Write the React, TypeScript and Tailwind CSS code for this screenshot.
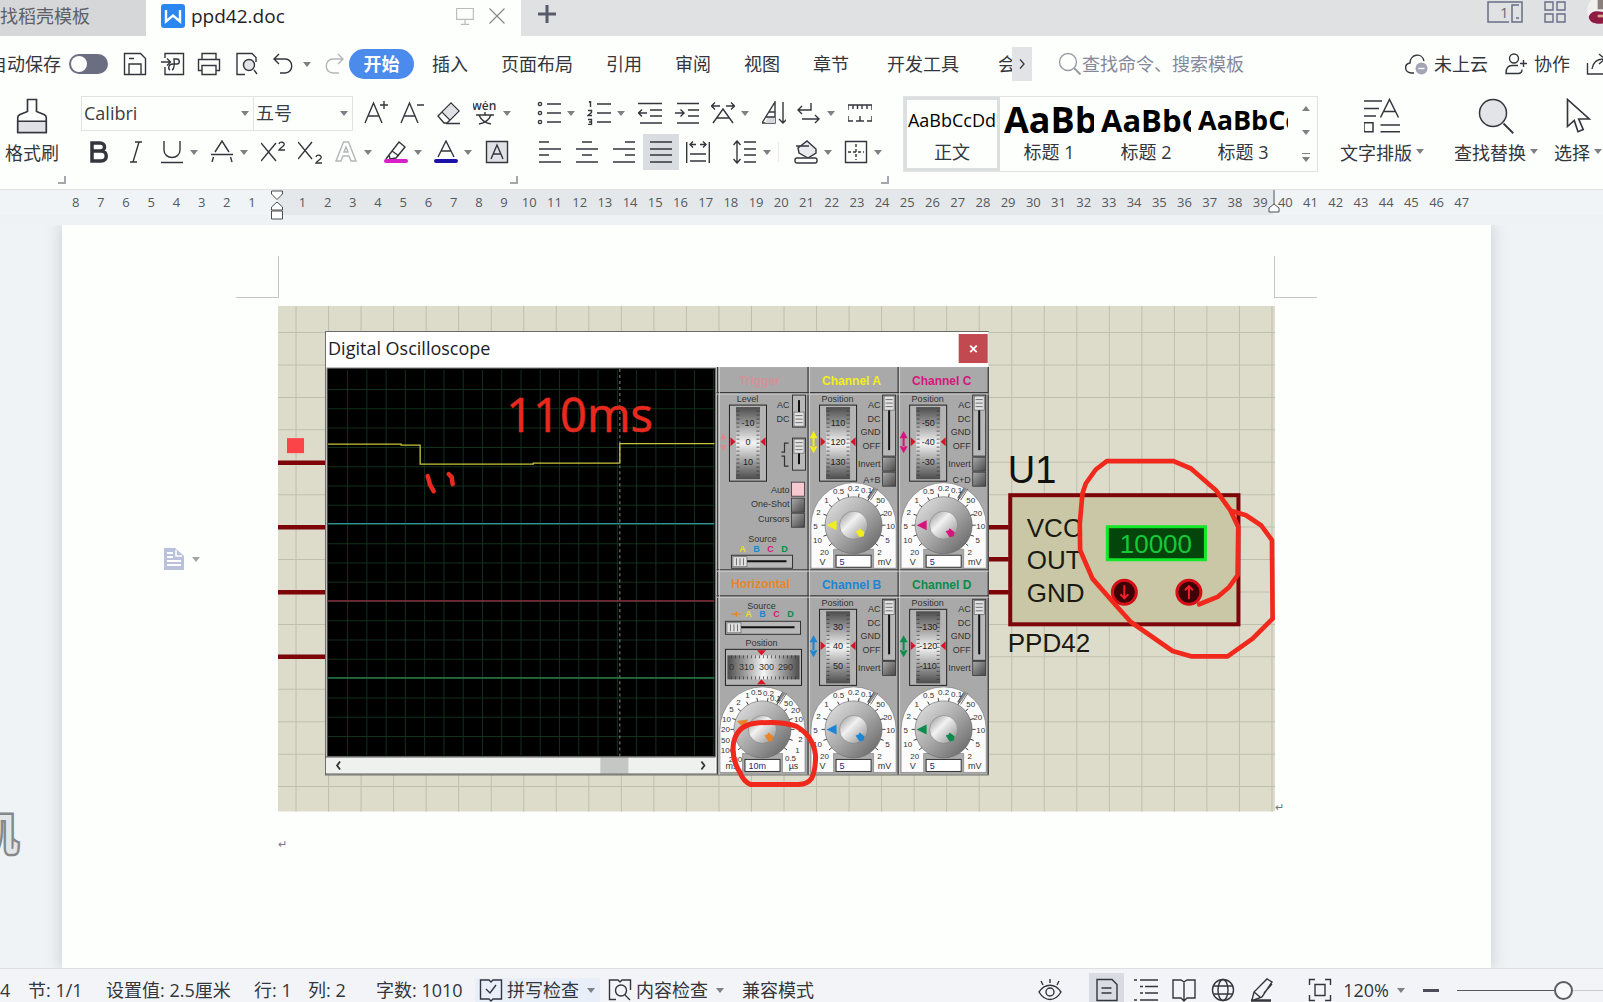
import React from 'react'

interface IconProps {
  children: React.ReactNode
  className?: string
}

const Icon: React.FC<IconProps> = function ({ children, className = 'size-6' }) {
  return (
    <svg viewBox="0 0 24 24" fill="none" stroke="currentColor" strokeWidth="1.4" className={`shrink-0 ${className}`} aria-hidden="true">
      {children}
    </svg>
  )
}

const Caret: React.FC<{ className?: string }> = function ({ className = '' }) {
  return (
    <svg viewBox="0 0 8 5" className={`h-[5px] w-2 shrink-0 fill-[#7d8084] ${className}`} aria-hidden="true">
      <path d="M0 0h8L4 5z" />
    </svg>
  )
}

interface ToolProps {
  label: string
  children: React.ReactNode
  wide?: boolean
  caret?: boolean
  active?: boolean
}

const Tool: React.FC<ToolProps> = function ({ label, children, wide, caret, active }) {
  const width = caret ? 'w-[50px] gap-[6px] pl-[5px]' : wide ? 'w-[38px] justify-center' : 'w-9 justify-center'
  return (
    <button type="button" aria-label={label} className={`flex h-9 shrink-0 items-center ${width} ${active ? 'bg-[#d9dce0]' : ''}`}>
      <Icon>{children}</Icon>
      {caret && <Caret />}
    </button>
  )
}

const GroupCorner: React.FC = () => (
  <div className="mt-auto mb-[5px] ml-auto h-2 w-2 shrink-0 border-r-2 border-b-2 border-[#a5a7aa]"></div>
)

/* ---------- title tabs ---------- */

const TabBar: React.FC = function () {
  return (
    <header className="flex h-9 shrink-0 bg-[#dfe1e3] text-lg leading-none">
      <button type="button" className="flex w-[146px] shrink-0 items-center overflow-hidden bg-[#d5d7d9] pb-1 whitespace-nowrap text-[#5d6067]">
        找稻壳模板
      </button>
      <div className="flex w-[375px] shrink-0 items-center bg-[#fdfffd] pb-1 pl-[15px]">
        <svg viewBox="0 0 24 24" className="size-6 shrink-0" aria-hidden="true">
          <rect width="24" height="24" rx="3" fill="#2b86f0" />
          <path d="M5 6v11.500l7-6 7 6V6" fill="none" stroke="#fff" strokeWidth="2.400" />
        </svg>
        <span className="ml-[6px] text-[19px] text-[#1f2227]">ppd42.doc</span>
        <Icon className="ml-auto size-5 text-[#b9bbbd]"><path d="M2 3h20v13H2zM12 16v6M7 22h10" /></Icon>
        <button type="button" aria-label="关闭" className="mr-[14px] ml-3">
          <Icon className="size-5 text-[#85888c]"><path d="M3 3l18 18M21 3L3 21" /></Icon>
        </button>
      </div>
      <button type="button" aria-label="新建" className="mb-2 ml-[14px]">
        <Icon className="size-6 text-[#585b6c]"><path d="M12 3v18M3 12h18" strokeWidth="3" /></Icon>
      </button>
      <div className="ml-auto flex items-center gap-5 pb-3 text-[#6a6d86]">
        <svg viewBox="0 0 36 22" className="h-[22px] w-9" fill="none" stroke="currentColor" strokeWidth="1.500">
          <path d="M22 21H1V1h34v20H25V4h7M29 17h3" />
          <text x="13" y="17" fontSize="15" fill="currentColor" stroke="none">1</text>
        </svg>
        <Icon className="size-6"><path d="M2 2h8v8H2zM14 2h8v8h-8zM2 14h8v8H2zM14 14h8v8h-8z" /></Icon>
        <svg viewBox="0 0 18 30" className="h-7 w-4" aria-hidden="true">
          <circle cx="16" cy="13" r="16" fill="#f0efee" />
          <path d="M12 0h6v12h-6z" fill="#8b7f7b" />
          <path d="M2 20c4-7 9-6 16-5v13C8 29 2 26 2 20z" fill="#8f1b44" />
          <path d="M12 18h6v3h-6z" fill="#d9a58d" />
        </svg>
      </div>
    </header>
  )
}

/* ---------- menu row ---------- */

const menuTabs = ['插入', '页面布局', '引用', '审阅', '视图', '章节']

const MenuRow: React.FC = function () {
  return (
    <nav className="flex h-14 shrink-0 items-center overflow-hidden text-lg leading-none whitespace-nowrap text-[#33363c]">
      <label className="flex w-[112px] shrink-0 items-center justify-end gap-2 pr-1">
        自动保存
        <input type="checkbox" className="peer sr-only" />
        <span className="flex h-5 w-[39px] shrink-0 items-center rounded-full bg-[#6b6d80] px-[2px]">
          <span className="size-4 rounded-full bg-white"></span>
        </span>
      </label>
      <button type="button" aria-label="保存" className="ml-[11px]">
        <Icon><path d="M1.500 1.500h16l5 5v16h-21zM6 22.500V12h12v10.500M6 6.500h5" /></Icon>
      </button>
      <button type="button" aria-label="输出为PDF" className="ml-[14px]">
        <Icon><path d="M4 6V1.500h18.500v21H4V15M0 10h9M6 6.500l3.500 3.500L6 13.500M11 18c3-1 2-11 2-11h3c3 0 3 5 0 5h-4c-5 0-5 5-3 6" /></Icon>
      </button>
      <button type="button" aria-label="打印" className="ml-3">
        <Icon><path d="M5 7.500V1.500h14v6M5 18.500H1.500v-11h21v11H19M5 13.500h14v9H5z" /></Icon>
      </button>
      <button type="button" aria-label="打印预览" className="ml-[14px]">
        <Icon><path d="M10 22.500H2v-21h15l4 4V10M19 18l3 4" /><circle cx="14" cy="13" r="5.500" fill="#e3e4e8" /></Icon>
      </button>
      <button type="button" aria-label="撤销" className="ml-3 flex items-center gap-2">
        <Icon><path d="M8 2L3 7l5 5M3 7h11c9 0 9 14 0 14H9" /></Icon>
        <Caret />
      </button>
      <button type="button" aria-label="恢复" className="ml-3 w-[22px] overflow-hidden text-[#b4b7ba]">
        <Icon><path d="M15 2l5 5-5 5M20 7H10c-9 0-9 14 0 14h6" /></Icon>
      </button>
      <button type="button" className="mr-[2px] ml-1 h-[30px] w-[65px] shrink-0 rounded-full bg-[#4a8bec] font-bold text-white">开始</button>
      <div className="flex shrink-0 gap-px">
        {menuTabs.map((tab) => (
          <button key={tab} type="button" className="px-4">{tab}</button>
        ))}
      </div>
      <button type="button" className="shrink-0 px-[22px]">开发工具</button>
      <button type="button" className="ml-[17px] w-[14px] shrink-0 overflow-hidden">会</button>
      <button type="button" aria-label="更多" className="flex h-[34px] w-5 shrink-0 items-center justify-center bg-[#e2e3e6]">
        <Icon className="size-4"><path d="M9 5l6 7-6 7" strokeWidth="2" /></Icon>
      </button>
      <label className="ml-[26px] flex flex-1 items-center text-[#85889a]">
        <Icon className="size-6 text-[#9a9ca5]"><circle cx="10" cy="10" r="8.500" /><path d="M16 16l6.500 6.500" strokeWidth="2" /></Icon>
        <input type="text" aria-label="搜索" placeholder="查找命令、搜索模板" className="w-full min-w-0 bg-transparent outline-none placeholder:text-[#85889a]" />
      </label>
      <button type="button" className="flex shrink-0 items-center gap-[6px]">
        <Icon>
          <path d="M10 21H7c-7-1-7-9-1-10C6 2 18 0 20 9" />
          <circle cx="17.500" cy="16.500" r="6" fill="#a3a4b4" stroke="none" />
          <path d="M14.500 16.500h6" stroke="#fff" />
        </Icon>
        未上云
      </button>
      <button type="button" className="ml-4 flex shrink-0 items-center gap-[6px]">
        <Icon><circle cx="10" cy="6.500" r="4.500" /><path d="M14 21.500H2c0-6 2-8 6-8h6M19.500 8v7M16 11.500h7M14 21.500c3 0 4-1 4-4" /></Icon>
        协作
      </button>
      <button type="button" aria-label="分享" className="ml-4 w-[17px] shrink-0 overflow-hidden">
        <Icon><path d="M1.500 11v11h20v-6M6 17c1-7 5-10 12-10M13 2l6 5-6 5" /></Icon>
      </button>
    </nav>
  )
}

/* ---------- ribbon ---------- */

const FontGroup: React.FC = function () {
  return (
    <section className="flex h-full w-[437px] shrink-0 flex-col">
      <div className="flex h-[42px] items-center">
        <div className="flex h-[35px] w-[272px] shrink-0 border border-[#e0e2e3] text-lg text-[#3a3d42]">
          <label className="relative flex w-[172px] items-center border-r border-[#e0e2e3]">
            <select aria-label="字体" className="w-full appearance-none bg-transparent pl-[2px] leading-6 outline-none">
              <option>Calibri</option>
            </select>
            <Caret className="pointer-events-none absolute right-1" />
          </label>
          <label className="relative flex flex-1 items-center">
            <select aria-label="字号" className="w-full appearance-none bg-transparent pl-[2px] leading-6 outline-none">
              <option>五号</option>
            </select>
            <Caret className="pointer-events-none absolute right-1" />
          </label>
        </div>
        <div className="ml-[5px] flex">
          <Tool label="增大字号"><path d="M1 22L9.500 2 18 22M4 15h11M16 4h8M20 0v8" /></Tool>
          <Tool label="减小字号"><path d="M1 22L9.500 2 18 22M4 15h11M17 4h7" /></Tool>
          <Tool label="清除格式" wide><path d="M1 15L14 2l8 8-12 12H7zM5 11l8 8M9 22.500h14" /><path d="M6 11l8-8 7 7-8 8z" fill="#e0e1e5" stroke="none" /></Tool>
          <Tool label="拼音指南" caret>
            <text x="-1" y="9" fontSize="12" fontWeight="600" stroke="none" fill="currentColor">wén</text>
            <path d="M3 14h18M12 11v3M6 14c2 5 6 8 12 9M18 14c-2 5-6 8-12 9" />
          </Tool>
        </div>
      </div>
      <div className="flex h-9">
        <Tool label="加粗"><path d="M5 3h8c6 0 6 8 0 8H5zM5 11h9c7 0 7 10 0 10H5z" strokeWidth="3.500" /></Tool>
        <Tool label="倾斜" wide><path d="M11 2h7M6 22h7M15 2L9 22" /></Tool>
        <Tool label="下划线" caret><path d="M4 1v9c0 10 16 10 16 0V1M1 22.500h22" /></Tool>
        <Tool label="删除线" caret><path d="M5 12L12 1l7 11M1 14.500h22M3.500 17L2 22M20.500 17l1.500 5" /></Tool>
        <Tool label="上标"><path d="M0 3l15 18M15 3L0 21M18 4c1-3 6-2 5 1-1 2-4 3-5 5h6" /></Tool>
        <Tool label="下标" wide><path d="M0 2l14 17M14 2L0 19M18 17c1-3 6-2 5 1-1 2-4 3-5 5h6" /></Tool>
        <Tool label="文字效果" caret><path d="M2 21L9.500 2h5L22 21h-5l-2-5H9l-2 5zM10 12h4l-2-5z" stroke="#b3b5b8" /></Tool>
        <Tool label="突出显示" caret>
          <path d="M5 15L15 2l6 5-9 11-6 1zM8 11l7 5M5 15l-3 4" />
          <path d="M2 21h20" stroke="#d81fc8" strokeWidth="4" strokeLinecap="round" />
        </Tool>
        <Tool label="字体颜色" caret>
          <path d="M4 17L12 1l8 16M7 11h10" />
          <path d="M2 21h20" stroke="#1c10a8" strokeWidth="4" strokeLinecap="round" />
        </Tool>
        <Tool label="字符底纹"><path d="M1.500 1.500h21v21h-21z" fill="#e0e2e6" /><path d="M6 19l6-14 6 14M8 14h8" /></Tool>
      </div>
      <GroupCorner />
    </section>
  )
}

const ParagraphGroup: React.FC = function () {
  return (
    <section className="flex h-full w-[358px] shrink-0 flex-col">
      <div className="flex h-[42px] items-center pl-px">
        <Tool label="项目符号" caret>
          <circle cx="3" cy="3" r="1.600" /><circle cx="3" cy="12" r="1.600" /><circle cx="3" cy="21" r="1.600" />
          <path d="M10 3h14M10 12h14M10 21h14" />
        </Tool>
        <Tool label="编号" caret>
          <path d="M10 3h14M10 12h14M10 21h14M2 1.500L3.500 0v6M1 9.500h3.500v2L1 14.500h4M1 18.500h3.500v5H1M2 21h2" />
        </Tool>
        <Tool label="减少缩进"><path d="M0 2.500h24M12 9h12M12 15h12M2 22h22M0 12h9M4 8.500L.5 12 4 15.500" /></Tool>
        <Tool label="增加缩进" wide><path d="M2 2.500h22M13 9h11M13 15h11M2 22h22M0 12h9M5.500 8.500L9 12l-3.500 3.500" /></Tool>
        <Tool label="中文版式" caret><path d="M0 5h9M15 5h9M4 1.500L.5 5 4 8.500M20 1.500L23.500 5 20 8.500M2 22L12 8l10 14M6 17h12" /></Tool>
        <Tool label="排序"><path d="M0 22L13 1v21z" /><path d="M6 16h7v6H3z" fill="#d6d8dd" stroke="none" /><path d="M4 16h9M7 11h6M21 1v21M17 18l4 4 4-4" /></Tool>
        <Tool label="换行符" caret><path d="M14 2v7H1M5 5L1 9l4 4M5 18h17M18 14l4 4-4 4" /></Tool>
        <Tool label="制表位"><path d="M0 9V4h24v5M5 4v4M9.500 4v4M14 4v4M19 4v4M0 15v5h5M19 20h5v-5M8 20h8M12 15v5" /></Tool>
      </div>
      <div className="flex h-9">
        <Tool label="左对齐" wide><path d="M1 2h10M1 9h22M1 15h10M1 22h22" /></Tool>
        <Tool label="居中"><path d="M7 2h10M1 9h22M7 15h10M1 22h22" /></Tool>
        <Tool label="右对齐" wide><path d="M13 2h10M1 9h22M13 15h10M1 22h22" /></Tool>
        <Tool label="两端对齐" active><path d="M1 2h22M1 9h22M1 15h22M1 22h22" /></Tool>
        <Tool label="分散对齐" wide><path d="M.7 2v21M23.300 2v21M4 4.500h6M14 4.500h6M7 1.500l-3 3 3 3M17 1.500l3 3-3 3M4 14h16M4 21h16" /></Tool>
        <div className="w-[11px] shrink-0"></div>
        <Tool label="行距" caret><path d="M4 1v22M.5 5L4 1l3.500 4M.5 19L4 23l3.500-4M11 2h12M11 9h12M11 15h12M11 22h12" /></Tool>
        <div className="my-2 w-[11px] shrink-0 border-l border-[#e6e8ea]"></div>
        <Tool label="底纹颜色" caret>
          <path d="M4 8L13 1l9 8v4l-8 5-9-5zM2 6h13" fill="#e9eaee" />
          <rect x="1" y="18" width="22" height="5" rx="2" fill="#fff" />
        </Tool>
        <Tool label="边框" caret><path d="M1.500 1.500h21v21h-21z" /><path d="M12 4v16M4 12h16" strokeDasharray="3 2" /></Tool>
      </div>
      <GroupCorner />
    </section>
  )
}

const StyleGallery: React.FC = function () {
  return (
    <section className="flex h-[76px] w-[415px] shrink-0 border border-[#e0e2e3] text-lg">
      <button type="button" className="flex w-[96px] shrink-0 flex-col items-center border-[3px] border-[#dcdfe0]">
        <span className="flex h-10 items-center text-black">AaBbCcDd</span>
        <span className="leading-6 text-[#33363c]">正文</span>
      </button>
      <button type="button" className="ml-1 flex w-[90px] shrink-0 flex-col pt-[3px]">
        <span className="flex h-10 w-full items-center overflow-hidden text-4xl font-bold text-black">AaBbCcDd</span>
        <span className="w-full leading-6 text-[#33363c]">标题 1</span>
      </button>
      <button type="button" className="ml-[7px] flex w-[90px] shrink-0 flex-col pt-[3px]">
        <span className="flex h-10 w-full items-center overflow-hidden text-[31px] font-bold text-black">AaBbCcDd</span>
        <span className="w-full leading-6 text-[#33363c]">标题 2</span>
      </button>
      <button type="button" className="ml-[7px] flex w-[90px] shrink-0 flex-col pt-[3px]">
        <span className="flex h-10 w-full items-center overflow-hidden text-[27px] font-bold text-black">AaBbCcDd</span>
        <span className="w-full leading-6 text-[#33363c]">标题 3</span>
      </button>
      <div className="ml-auto flex w-[22px] flex-col items-center justify-between py-[9px]">
        <button type="button" aria-label="上一行" className="flex"><Caret className="rotate-180" /></button>
        <button type="button" aria-label="下一行" className="flex"><Caret /></button>
        <button type="button" aria-label="展开" className="flex flex-col gap-[3px]">
          <span className="h-px w-2 bg-[#7d8084]"></span>
          <Caret />
        </button>
      </div>
    </section>
  )
}

const BigTool: React.FC<{ label: string, children: React.ReactNode }> = function ({ label, children }) {
  return (
    <button type="button" className="flex shrink-0 flex-col items-center gap-[7px] pt-[6px]">
      <Icon className="size-9">{children}</Icon>
      <span className="flex items-center gap-1 leading-6">{label}<Caret className="mb-1" /></span>
    </button>
  )
}

const Ribbon: React.FC = function () {
  return (
    <div className="flex h-[98px] shrink-0 overflow-hidden border-b border-[#dfe1e3] text-lg whitespace-nowrap text-[#33363c]">
      <section className="flex w-[66px] shrink-0 flex-col">
        <button type="button" className="flex w-16 flex-col items-center gap-[7px] pt-[6px]">
          <Icon className="size-9"><path d="M9 1h6v8l5 2c1 .5 1.500 1 1.500 2v10h-19V13c0-1 .5-1.500 1.500-2l5-2z" strokeWidth="1.100" /><path d="M2.500 15.500h19V23h-19z" fill="#e0e1e5" strokeWidth="1.100" /></Icon>
          <span className="leading-6">格式刷</span>
        </button>
        <GroupCorner />
      </section>
      <div className="w-[15px] shrink-0"></div>
      <FontGroup />
      <div className="w-[13px] shrink-0"></div>
      <ParagraphGroup />
      <div className="w-[14px] shrink-0"></div>
      <div className="pt-1"><StyleGallery /></div>
      <div className="ml-[22px] flex gap-[30px]">
        <BigTool label="文字排版">
          <path d="M0 2h12M0 7h10M0 12h8M0 16.500h6v6H0zM11 18h13M11 22.500h13M11 13l6-12 6 12M13 9h8" strokeWidth="1" />
        </BigTool>
        <div className="flex gap-4">
          <BigTool label="查找替换">
            <circle cx="10" cy="10" r="9" fill="#e3e4e8" strokeWidth="1" /><path d="M17 17l6.500 6.500" strokeWidth="1.200" />
          </BigTool>
          <BigTool label="选择">
            <path d="M5 1v18l4.500-4 2.500 7.500 3.500-1.500-3-7h7z" strokeWidth="1.100" />
          </BigTool>
        </div>
      </div>
    </div>
  )
}

/* ---------- ruler ---------- */

const marks = Array.from({ length: 56 }, (_, i) => i - 8)

const markBackground = (n: number) => {
  if (n === 0) return 'bg-linear-to-r from-[#f1f4f6] from-50% to-[#e5e8eb] to-50%'
  return n > 0 && n < 40 ? 'bg-[#e5e8eb]' : 'bg-[#f1f4f6]'
}

const Ruler: React.FC = function () {
  return (
    <div className="flex h-[35px] shrink-0 bg-[#eef2f5] text-[13px] leading-none text-[#55585d]">
      <div className="h-[25px] w-[63px] shrink-0 bg-[#f1f4f6]"></div>
      <div className="flex w-[1411px] shrink-0">
        {marks.map((n) => (
          <div key={n} className={`flex h-[25px] flex-1 justify-center pt-[6px] ${markBackground(n)}`}>
            {n === 0 ? (
              <svg viewBox="0 0 14 30" className="relative z-10 -mt-[6px] h-[30px] w-[14px] shrink-0" fill="#fff" stroke="#4b4e52">
                <path d="M1.500 1v3L7 9.500 12.500 4V1zM1.500 20v-3L7 12l5.500 5v3zM1.500 21h11v8h-11z" />
              </svg>
            ) : Math.abs(n)}
            {n === 39 && (
              <svg viewBox="0 0 12 24" className="relative z-10 -mt-[6px] -mr-3 h-6 w-3 shrink-0" fill="#fff" stroke="#4b4e52">
                <path d="M6 0v14M1 22v-4l5-4 5 4v4z" />
              </svg>
            )}
          </div>
        ))}
      </div>
      <div className="h-[25px] flex-1 bg-[#f1f4f6]"></div>
    </div>
  )
}

/* ---------- embedded circuit picture ---------- */

const range = (from: number, to: number, step: number) => {
  const out: number[] = []
  for (let v = from; v < to; v += step) out.push(v)
  return out
}

const voltNumbers: [string, number, number][] = [
  ['0.1', 13, -35], ['0.2', 0, -37], ['0.5', -15, -34], ['1', -27, -25], ['2', -35, -13], ['5', -38, 1], ['10', -36, 15],
  ['20', -29, 27], ['50', 27, -25], ['20', 34, -12], ['10', 37, 1], ['5', 34, 15], ['2', 26, 27],
]

const timeNumbers: [string, number, number][] = [
  ['0.5', -6, -37], ['0.2', 6, -36], ['0.1', 13, -31], ['1', -15, -34], ['2', -24, -27], ['5', -31, -20], ['10', -36, -10],
  ['20', -37, 0], ['50', -37, 11], ['100', -35, 21], ['200', -27, 30], ['50', 26, -26], ['20', 33, -19], ['10', 36, -10],
  ['5', 38, 0], ['2', 38, 10], ['1', 35, 21], ['0.5', 28, 29],
]

interface DialProps {
  x: number
  y: number
  color: string
  numbers: [string, number, number][]
  units: [string, string]
  value: string
  angle?: number
}

const Dial: React.FC<DialProps> = function ({ x, y, color, numbers, units, value, angle = 0 }) {
  return (
    <g transform={`translate(${x} ${y})`}>
      <path d="M-42.500 43V0a42.500 42.500 0 0 1 85 0V43H20V24H-20V43z" fill="#fbfbfb" stroke="#777" strokeWidth=".6" />
      <path d="M15-27L22-37" stroke="#8c8c8c" strokeWidth="3" />
      <path d="M14-27L20-37M17-25L24-36" stroke="#333" strokeWidth=".7" />
      {range(-220, 41, 20).map((a) => (
        <path key={a} d="M28 0h4" stroke="#222" strokeWidth=".8" transform={`rotate(${a})`} />
      ))}
      {numbers.map(([text, dx, dy], i) => (
        <text key={i} x={dx} y={dy + 3} fontSize="8" textAnchor="middle" fill="#333">{text}</text>
      ))}
      <circle r="28.500" fill="url(#knob)" stroke="#666" strokeWidth=".6" />
      <circle r="14" fill="url(#cap)" stroke="#777" strokeWidth=".5" />
      <path d="M-27 0l10-5v10z" fill={color} transform={`rotate(${angle})`} />
      <path d="M2 6l3-1 1-2 5 4-1 4-4 1z" fill={color} />
      <rect x="-17.500" y="30" width="35" height="12" fill="#fff" stroke="#333" />
      <text x="-14" y="39.500" fontSize="9" fill="#1f1f78">{value}</text>
      <text x="-31" y="40" fontSize="9" textAnchor="middle" fill="#333">{units[0]}</text>
      <text x="31" y="40" fontSize="9" textAnchor="middle" fill="#333">{units[1]}</text>
    </g>
  )
}

/* vertical thumb wheel; x, y is the top left corner of its frame */
const Wheel: React.FC<{ x: number, y: number, values: string[] }> = function ({ x, y, values }) {
  return (
    <g transform={`translate(${x} ${y})`}>
      <rect width="37" height="76" fill="#b4b4b4" stroke="#222" />
      <rect x="6.500" y="2" width="24" height="72" fill="url(#wheel)" />
      {range(6, 72, 4).map((ty) => (
        <path key={ty} d={`M7 ${ty}h3M27 ${ty}h3`} stroke="#333" strokeWidth=".7" />
      ))}
      {values.map((v, i) => (
        <text key={v} x="18.500" y={20.500 + i * 19.500} fontSize="9" textAnchor="middle" fill="#222">{v}</text>
      ))}
      <path d="M1 32l5 4.500-5 4.500zM36 32l-5 4.500 5 4.500z" fill="#d8142a" />
    </g>
  )
}

const Switch: React.FC<{ x: number, y: number, height: number, low?: boolean }> = function ({ x, y, height, low }) {
  const knob = low ? height - 15 : 1
  return (
    <g transform={`translate(${x} ${y})`}>
      <rect width="13" height={height} fill="#b8b8b8" stroke="#333" />
      <path d={`M6.500 5V${height - 6}`} stroke="#111" strokeWidth="2" />
      <rect x="1.500" y={knob} width="10" height="14" fill="#e2e2e2" stroke="#555" strokeWidth=".6" />
      <path d={`M3 ${knob + 3.500}h7M3 ${knob + 7}h7M3 ${knob + 10.500}h7`} stroke="#555" strokeWidth=".8" />
    </g>
  )
}

const HSwitch: React.FC<{ x: number, y: number, width: number }> = function ({ x, y, width }) {
  return (
    <g transform={`translate(${x} ${y})`}>
      <rect width={width} height="13" fill="#b8b8b8" stroke="#333" />
      <path d={`M6 6h${width - 12}`} stroke="#111" strokeWidth="2" />
      <rect x="1.500" y="1.500" width="14" height="10" fill="#e2e2e2" stroke="#555" strokeWidth=".6" />
      <path d="M5 3v7M8.500 3v7M12 3v7" stroke="#555" strokeWidth=".8" />
    </g>
  )
}

const Push: React.FC<{ x: number, y: number, fill?: string }> = ({ x, y, fill = 'url(#push)' }) => (
  <rect x={x} y={y} width="13" height="14" fill={fill} stroke="#333" strokeWidth=".8" />
)

interface ChannelProps {
  x: number
  y: number
  name: string
  color: string
  values: string[]
  sum?: string
}

const Channel: React.FC<ChannelProps> = function ({ x, y, name, color, values, sum }) {
  return (
    <g transform={`translate(${x} ${y})`}>
      <text x="44" y="18" fontSize="12" fontWeight="bold" textAnchor="middle" fill={color}>{name}</text>
      <text x="30" y="35" fontSize="9" textAnchor="middle" fill="#333">Position</text>
      <Wheel x={12} y={38} values={values} />
      <path d="M6 64l4 7H2zM6 86l4-7H2zM5 70h2v10H5z" fill={color} />
      {['AC', 'DC', 'GND', 'OFF'].map((t, i) => (
        <text key={t} x="73" y={41 + i * 13.500} fontSize="9" textAnchor="end" fill="#333">{t}</text>
      ))}
      <Switch x={75} y={28} height={61} />
      <text x="73" y="100" fontSize="9" textAnchor="end" fill="#333">Invert</text>
      <Push x={75} y={90} />
      {sum && <text x="73" y="116" fontSize="9" textAnchor="end" fill="#333">{sum}</text>}
      {sum && <Push x={75} y={105} />}
      <Dial x={46} y={158} color={color} numbers={voltNumbers} units={['V', 'mV']} value="5" />
    </g>
  )
}

const CircuitPicture: React.FC = function () {
  return (
    <svg viewBox="278 306 996 505" className="block min-w-0 flex-1" fontFamily="'Liberation Sans', Arial, sans-serif" role="img" aria-label="Digital Oscilloscope">
      <defs>
        <linearGradient id="wheel" x1="0" y1="0" x2="0" y2="1">
          <stop offset="0" stopColor="#4c4c4c" /><stop offset=".5" stopColor="#f4f4f4" /><stop offset="1" stopColor="#4c4c4c" />
        </linearGradient>
        <linearGradient id="wheelH">
          <stop offset="0" stopColor="#4c4c4c" /><stop offset=".5" stopColor="#f4f4f4" /><stop offset="1" stopColor="#4c4c4c" />
        </linearGradient>
        <linearGradient id="knob" x1="0" y1="0" x2="1" y2="1">
          <stop offset="0" stopColor="#e8e8e8" /><stop offset=".5" stopColor="#a8a8a8" /><stop offset="1" stopColor="#5c5c5c" />
        </linearGradient>
        <linearGradient id="cap" x1="0" y1="0" x2="1" y2="1">
          <stop offset="0" stopColor="#8f8f8f" /><stop offset=".4" stopColor="#f2f2f2" /><stop offset="1" stopColor="#888" />
        </linearGradient>
        <linearGradient id="push" x1="0" y1="0" x2="1" y2="1">
          <stop offset="0" stopColor="#aaa" /><stop offset="1" stopColor="#484848" />
        </linearGradient>
        <clipPath id="pins"><rect x="1010" y="490" width="69" height="90" /></clipPath>
      </defs>

      <rect x="278" y="306" width="996" height="505" fill="#dddccb" />
      <g stroke="#bfbfb0" strokeWidth="1">
        {range(296, 1274, 32.500).map((x) => <path key={x} d={`M${x} 306V811`} />)}
        {range(332.500, 811, 32.400).map((y) => <path key={y} d={`M278 ${y}H1274`} />)}
      </g>
      <path d="M278 462.500h47M278 527h47M278 592h47M278 656.500h47M988 527h20M988 559h20M988 592h20" stroke="#7d0408" strokeWidth="4.500" />
      <rect x="287" y="438" width="17" height="15" fill="#fb4447" />

      {/* oscilloscope window */}
      <rect x="325.500" y="331.500" width="662" height="443" fill="#fff" stroke="#6a6a66" />
      <rect x="326" y="332" width="662" height="35" fill="#fff" />
      <text x="328" y="355" fontSize="18" fill="#1d2026" fontFamily="'Open Sans', sans-serif">Digital Oscilloscope</text>
      <rect x="958" y="334" width="29" height="29" fill="#c2494f" />
      <path d="M969.500 345.500l6.500 6.500M976 345.500l-6.500 6.500" stroke="#fff" strokeWidth="1.800" />
      <rect x="327" y="368" width="388" height="388" fill="#000" stroke="#777" />
      <g stroke="#12301d" strokeWidth="1">
        {range(347.500, 714, 19.250).map((x) => <path key={x} d={`M${x} 370V755`} />)}
        {range(389.500, 755, 19.250).map((y) => <path key={y} d={`M328 ${y}H714`} />)}
      </g>
      <path d="M619.500 369V756" stroke="#8c8c8c" strokeDasharray="3 3" />
      <g fill="none" strokeWidth="1.300">
        <path d="M328 523.500H714" stroke="#2a9292" />
        <path d="M328 600.500H714" stroke="#9a3045" />
        <path d="M328 677.500H714" stroke="#2c8a50" />
        <path d="M328 444H401V445H420V464H533V463H619.500V443.500H714" stroke="#c6c63a" />
      </g>
      <text x="506" y="432" fontSize="47" fill="#e82a1e" fontFamily="'Open Sans', sans-serif" stroke="#e82a1e" strokeWidth=".6">110ms</text>
      <path d="M427.500 476l2 7M429.500 484l4 7M448.500 474l3 3 1 7" stroke="#ea2a20" strokeWidth="4.500" strokeLinecap="round" fill="none" />
      <rect x="326" y="757" width="389" height="16" fill="#eef1ee" />
      <rect x="600" y="757" width="28" height="16" fill="#c5c7c5" />
      <path d="M340 761l-3 4 3 4M701 761l3 4-3 4" fill="none" stroke="#333" strokeWidth="1.800" />
      <path d="M325 756.500H715M325 773.500H988" stroke="#555" />

      {/* control panel */}
      <rect x="716" y="367" width="272" height="407" fill="#a9a9a9" />
      <path d="M716 392.500h272M716 569.500h272M716 595.500h272M717 367v407M807.500 367v407M897.500 367v407M987.500 367v407" stroke="#3b3b3b" strokeWidth="1.200" />
      <path d="M716 394h272M716 571h272M716 597h272M719 367v407M809 367v407M899 367v407" stroke="#d6d6d6" strokeWidth=".8" />

      <Channel x={807} y={367} name="Channel A" color="#f2ee1c" values={['110', '120', '130']} sum="A+B" />
      <Channel x={897} y={367} name="Channel C" color="#d8147c" values={['-50', '-40', '-30']} sum="C+D" />
      <Channel x={807} y={571} name="Channel B" color="#1b86d6" values={['30', '40', '50']} />
      <Channel x={897} y={571} name="Channel D" color="#0a8c4c" values={['-130', '-120', '-110']} />

      <g fontSize="9" fill="#333">
        <text x="759" y="385" fontSize="12" fontWeight="bold" textAnchor="middle" fill="#d39297">Trigger</text>
        <text x="747" y="402" textAnchor="middle">Level</text>
        <Wheel x={729} y={405} values={['-10', '0', '10']} />
        <path d="M723 433l3 6h-6zM723 451l3-6h-6z" fill="#e0868e" />
        <text x="789" y="408" textAnchor="end">AC</text>
        <text x="789" y="422" textAnchor="end">DC</text>
        <Switch x={792} y={395} height={32} low />
        <path d="M781 452h3v-9h4M781 456h3v10h4" fill="none" stroke="#333" strokeWidth="1.200" />
        <Switch x={792} y={438} height={32} />
        <text x="789" y="493" textAnchor="end">Auto</text>
        <Push x={791} y={482} fill="#f6c9d0" />
        <text x="789" y="507" textAnchor="end">One-Shot</text>
        <Push x={791} y={498} />
        <text x="789" y="522" textAnchor="end">Cursors</text>
        <Push x={791} y={513} />
        <text x="762" y="542" textAnchor="middle">Source</text>
        <g fontWeight="bold" fontSize="9" textAnchor="middle">
          <text x="742" y="552" fill="#e8e020">A</text>
          <text x="756" y="552" fill="#1b86d6">B</text>
          <text x="770" y="552" fill="#d8147c">C</text>
          <text x="784" y="552" fill="#0a8c4c">D</text>
          <text x="748" y="617" fill="#e8e020">A</text>
          <text x="762" y="617" fill="#1b86d6">B</text>
          <text x="776" y="617" fill="#d8147c">C</text>
          <text x="790" y="617" fill="#0a8c4c">D</text>
        </g>
        <path d="M731 614h5M736 611.500v5M738 614h2" stroke="#e8851c" strokeWidth="1.500" />
        <HSwitch x={731} y={555} width={61} />

        <text x="760" y="588" fontSize="12" fontWeight="bold" textAnchor="middle" fill="#e8852c">Horizontal</text>
        <text x="761" y="609" textAnchor="middle">Source</text>
        <HSwitch x={725} y={621} width={75} />
        <text x="761" y="646" textAnchor="middle">Position</text>
        <rect x="725" y="649" width="76" height="36" fill="#b4b4b4" stroke="#222" />
        <rect x="727" y="655" width="72" height="24" fill="url(#wheelH)" />
        {range(731, 798, 4).map((x) => <path key={x} d={`M${x} 655v3M${x} 676v3`} stroke="#333" strokeWidth=".7" />)}
        <text x="731" y="670" textAnchor="middle">0</text>
        <text x="746" y="670" textAnchor="middle">310</text>
        <text x="766" y="670" textAnchor="middle">300</text>
        <text x="785" y="670" textAnchor="middle">290</text>
        <path d="M756.500 650h9l-4.500 5zM756.500 684h9l-4.500-5z" fill="#d8142a" />
      </g>
      <Dial x={762} y={729} color="#e8852c" numbers={timeNumbers} units={['ms', 'µs']} value="10m" angle={18} />
      <path d="M740 773q-9-14-7-30 3-17 20-20 28-3 43 3 17 10 19 29 0 16-4 23-4 6-13 6h-48q-7-3-10-11" fill="none" stroke="#f0291c" strokeWidth="5" strokeLinecap="round" />

      {/* sensor */}
      <text x="1007" y="483" fontSize="38" fill="#111">U1</text>
      <rect x="1009.500" y="495" width="228" height="129" fill="#c9c7a5" stroke="#7d0408" strokeWidth="4" />
      <g fontSize="26" fill="#1a1a12">
        <g clipPath="url(#pins)">
          <text x="1026" y="537">VCC</text>
          <text x="1026" y="569">OUT</text>
        </g>
        <text x="1026" y="602">GND</text>
        <text x="1007" y="652">PPD42</text>
        <rect x="1106.500" y="526.500" width="98" height="33" fill="#03450a" stroke="#10e828" strokeWidth="3" />
        <text x="1155" y="553" textAnchor="middle" fill="#18c838">10000</text>
      </g>
      <g fill="#3c0206" stroke="#d40f18" strokeWidth="3">
        <circle cx="1123.500" cy="592" r="12" />
        <circle cx="1188" cy="592" r="12" />
        <path d="M1123.500 585v13M1119.500 594l4 4 4-4M1188 599v-13M1184 590l4-4 4 4" fill="none" stroke="#f0202a" strokeWidth="2" />
      </g>
      <path transform="translate(980 440) scale(.3333)" d="M655 492L710 470 745 440 770 405 772 260 748 210 705 150 630 85 578 63H378L345 88 315 130 305 160 297 250 298 330 335 415 405 495 450 545 575 632 630 648H740L815 595 875 535 873 300 840 255 795 225 755 213" fill="none" stroke="#f0291c" strokeWidth="14" strokeLinecap="round" strokeLinejoin="round" />
    </svg>
  )
}

/* ---------- document ---------- */

const Document: React.FC = function () {
  return (
    <main className="relative min-h-0 flex-1 overflow-hidden bg-[#eff3f5] pr-[112px] pl-[62px]">
      <div className="absolute top-[586px] -left-[26px] text-[44px] leading-none font-bold text-[#e3e6e7] [paint-order:stroke] [-webkit-text-stroke:5px_#85888a]">机</div>
      <article className="relative h-full bg-[#fdfffc] px-[174px] pt-[31px] shadow-[0_0_14px_2px_#cfd3d7]">
        <button type="button" aria-label="段落布局" className="absolute top-[323px] left-[102px] flex items-center gap-2 text-[#b9c2da]">
          <svg viewBox="0 0 20 22" className="h-[22px] w-5" aria-hidden="true">
            <path d="M0 0h11l9 8v14H0z" fill="#b9c2da" />
            <path d="M3 5h6M3 9h6M3 13h14M3 17h14" stroke="#fff" strokeWidth="2" />
            <path d="M12 2v6h6" fill="none" stroke="#fff" strokeWidth="1.500" />
          </svg>
          <Caret className="opacity-70" />
        </button>
        <div className="flex h-[42px] justify-between">
          <div className="w-[43px] border-r border-b border-[#c4c7c8]"></div>
          <div className="w-[43px] border-b border-l border-[#c4c7c8]"></div>
        </div>
        <div className="mt-2 flex items-end pl-[42px]">
          <CircuitPicture />
          <span className="w-[42px] text-[11px] leading-none text-[#777]">↵</span>
        </div>
        <p className="mt-[26px] pl-[42px] text-[11px] leading-none text-[#777]">↵</p>
      </article>
    </main>
  )
}

/* ---------- status bar ---------- */

const StatusBar: React.FC = function () {
  return (
    <footer className="flex h-[34px] shrink-0 items-start overflow-hidden border-t border-[#dcdfe1] bg-[#f2f4f7] pt-[9px] text-lg leading-6 whitespace-nowrap text-[#33363c]">
      <span className="w-7 shrink-0">4</span>
      <span className="w-[78px] shrink-0">节: 1/1</span>
      <span className="w-[148px] shrink-0">设置值: 2.5厘米</span>
      <span className="w-[54px] shrink-0">行: 1</span>
      <span className="w-[68px] shrink-0">列: 2</span>
      <span className="w-[99px] shrink-0">字数: 1010</span>
      <button type="button" className="flex w-[125px] shrink-0 items-center gap-1 bg-[#e9eff9] pl-1">
        <Icon><path d="M1.500 2h8.500l2 2 2-2h8.500v19H14l-2 2-2-2H1.500zM7 11l4 4 6-8" /></Icon>
        拼写检查
        <Caret className="ml-1" />
      </button>
      <button type="button" className="ml-2 flex w-[134px] shrink-0 items-center gap-1">
        <Icon><path d="M8 21.500H1.500V2H10l2 2 2-2h8.500v10M17 17l5 5" /><circle cx="13" cy="12.500" r="5.500" /></Icon>
        内容检查
        <Caret className="ml-1" />
      </button>
      <span className="shrink-0">兼容模式</span>
      <div className="ml-auto flex h-6 items-center">
        <button type="button" aria-label="护眼模式"><Icon><path d="M1 14c6-9 16-9 22 0-6 10-16 10-22 0zM12 1v4M3 3l2 4M21 3l-2 4" /><circle cx="12" cy="14" r="4" /></Icon></button>
        <button type="button" aria-label="页面视图" className="-my-2 ml-[27px] flex h-[34px] w-[35px] items-center justify-center bg-[#d9dde3]">
          <Icon><path d="M2 1.500h15l5 5v16H2zM6.500 10h10M6.500 15h10" /></Icon>
        </button>
        <button type="button" aria-label="大纲" className="ml-[10px]"><Icon><path d="M0 2h3M6 2h18M6 8.500h3M11 8.500h13M6 15h3M11 15h13M0 22h3M6 22h18" /></Icon></button>
        <button type="button" aria-label="阅读版式" className="ml-[14px]"><Icon><path d="M1 2h8l3 2 3-2h8v18h-8l-3 3-3-3H1zM12 4v18" /></Icon></button>
        <button type="button" aria-label="Web版式" className="ml-[15px]"><Icon><circle cx="12" cy="12" r="10.500" /><ellipse cx="12" cy="12" rx="5" ry="10.500" /><path d="M2.500 8h19M2.500 16h19" /></Icon></button>
        <button type="button" aria-label="写作模式" className="ml-[15px]"><Icon><path d="M2 22l2-8L17 1l5 3-10 15-8 3M4 14l6 5M14 15l8-9" /><path d="M1 22.500h20" strokeWidth="2.500" /></Icon></button>
        <button type="button" aria-label="适应窗口" className="ml-[34px]"><Icon><path d="M1.500 7V1.500H7M17 1.500h5.500V7M22.500 17v5.500H17M7 22.500H1.500V17M7 6.500h10v11H7z" /></Icon></button>
        <button type="button" className="ml-[11px] flex items-center gap-2">120%<Caret /></button>
        <button type="button" aria-label="缩小" className="ml-[18px] h-[3px] w-4 bg-[#4b4d5a]"></button>
        <input
          type="range"
          aria-label="缩放"
          defaultValue="76"
          className="ml-[18px] h-5 w-[146px] appearance-none bg-transparent [&::-webkit-slider-runnable-track]:h-px [&::-webkit-slider-runnable-track]:bg-linear-to-r [&::-webkit-slider-runnable-track]:from-[#55585d] [&::-webkit-slider-runnable-track]:from-70% [&::-webkit-slider-runnable-track]:to-[#c8cbce] [&::-webkit-slider-runnable-track]:to-70% [&::-webkit-slider-thumb]:-mt-[9px] [&::-webkit-slider-thumb]:size-[19px] [&::-webkit-slider-thumb]:appearance-none [&::-webkit-slider-thumb]:rounded-full [&::-webkit-slider-thumb]:border-2 [&::-webkit-slider-thumb]:border-[#5b5e63] [&::-webkit-slider-thumb]:bg-[#f7f8fa]"
        />
      </div>
    </footer>
  )
}

export default function App() {
  return (
    <div className="flex h-screen flex-col overflow-hidden bg-[#fdfffd] font-['Open_Sans','Noto_Sans_CJK_SC',sans-serif]">
      <TabBar />
      <MenuRow />
      <Ribbon />
      <Ruler />
      <Document />
      <StatusBar />
    </div>
  )
}
